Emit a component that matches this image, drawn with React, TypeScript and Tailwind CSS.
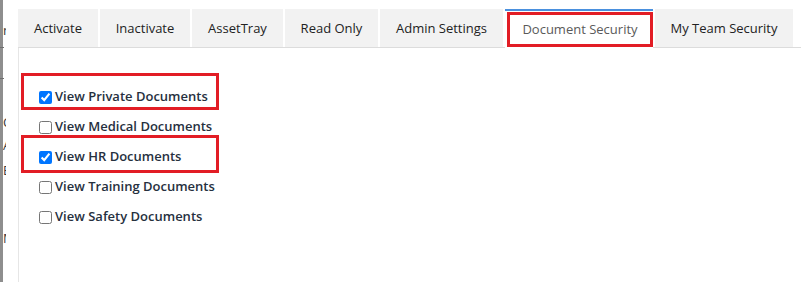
import React from "react";

const tabs = [
  { label: "Activate", w: "w-[80px]" },
  { label: "Inactivate", w: "w-[90px]" },
  { label: "AssetTray", w: "w-[91px]" },
  { label: "Read Only", w: "w-[93px]" },
  { label: "Admin Settings", w: "w-[123px]" },
];

const rows = [
  { label: "View Private Documents", checked: true, box: "top-[-9px] h-[37px]" },
  { label: "View Medical Documents", checked: false, box: "" },
  { label: "View HR Documents", checked: true, box: "top-[-7px] h-[38px]" },
  { label: "View Training Documents", checked: false, box: "" },
  { label: "View Safety Documents", checked: false, box: "" },
];

export default function App() {
  return (
    <div
      className="w-[801px] h-[282px] flex bg-white overflow-hidden"
      style={{ fontFamily: '"Open Sans", "Noto Sans", sans-serif' }}
    >
      {/* left strip */}
      <div className="w-[18px] h-full flex shrink-0">
        <div className="w-[3px] h-full bg-[#8e8e8e] flex flex-col">
          <div className="h-[47px]" />
          <div className="h-px w-[4px] bg-[#6f6f6f]" />
          <div className="h-[30px]" />
          <div className="h-px w-[4px] bg-[#6f6f6f]" />
        </div>
        <div className="w-[3px] h-full overflow-hidden flex flex-col text-[13px] leading-[16px] text-[#3a3a3a]">
          <div className="h-[22px]" />
          <div className="h-[16px]">n</div>
          <div className="h-[76px]" />
          <div className="h-[16px]">C</div>
          <div className="h-[7px]" />
          <div className="h-[16px]">A</div>
          <div className="h-[9px]" />
          <div className="h-[16px]">E</div>
          <div className="h-[52px]" />
          <div className="h-[16px]">M</div>
        </div>
        <div className="flex-1" />
      </div>

      {/* main */}
      <div className="flex-1 flex flex-col min-w-0">
        <div className="pt-[9px] flex gap-[2px] border-b border-[#dcdcdc] h-[48px] shrink-0">
          {tabs.map((t) => (
            <div
              key={t.label}
              className={`${t.w} h-[38px] bg-[#f2f2f2] flex items-center justify-center text-[13px] text-[#222] whitespace-nowrap pt-px`}
            >
              {t.label}
            </div>
          ))}
          <div className="w-[148px] h-[39px] bg-white border-t-2 border-[#4a90de] relative z-10">
            <div className="ml-[2px] mt-px h-[35px] border-[3px] border-[#e21d25] flex items-center justify-center text-[13px] text-[#5a5a5a] whitespace-nowrap">
              Document Security
            </div>
          </div>
          <div className="w-[138px] h-[38px] bg-[#f2f2f2] flex items-center justify-center text-[13px] text-[#222] whitespace-nowrap pt-px">
            My Team Security
          </div>
        </div>

        <div className="flex-1 border-l border-[#e6e6e6] pt-[34px] flex flex-col">
          {rows.map((r) => (
            <div key={r.label} className="relative h-[30px] flex items-center pl-[20px] gap-[3px]">
              {r.box && (
                <div
                  className={`absolute left-[2px] ${r.box} w-[198px] border-[3px] border-[#e21d25] pointer-events-none`}
                />
              )}
              <input
                type="checkbox"
                defaultChecked={r.checked}
                className="m-0 w-[13px] h-[13px] shrink-0"
              />
              <span className="text-[13px] font-semibold text-[#26303e] whitespace-nowrap">
                {r.label}
              </span>
            </div>
          ))}
        </div>
      </div>
    </div>
  );
}
